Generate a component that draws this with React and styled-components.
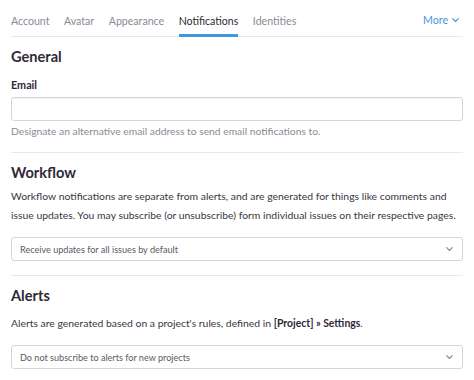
import React from "react";
import styled, { createGlobalStyle } from "styled-components";

const Global = createGlobalStyle`
  html, body { margin: 0; padding: 0; background: #fff; }
  body { font-family: Lato, "Open Sans", Arial, sans-serif; color: #2f2936; -webkit-font-smoothing: antialiased; }
  * { box-sizing: border-box; }
`;

const Page = styled.div`
  padding: 0 11px;
  width: 474px;
`;

const TabBar = styled.nav`
  display: flex;
  align-items: flex-end;
  height: 37px;
  border-bottom: 1px solid #e9e8ec;
`;

const Tab = styled.a`
  font-size: 10.6px;
  line-height: 16px;
  padding: 13px 0 5px;
  margin-right: 14.5px;
  margin-bottom: -1px;
  color: ${(p) => (p.$active ? "#2f2936" : "#8c8896")};
  border-bottom: 3px solid ${(p) => (p.$active ? "#3d98dd" : "transparent")};
  text-decoration: none;
  white-space: nowrap;
`;

const More = styled.a`
  margin-left: auto;
  display: flex;
  align-items: center;
  gap: 4px;
  font-size: 10.6px;
  line-height: 16px;
  padding: 13px 4px 8px 0;
  color: #3d98dd;
`;

const Section = styled.section`
  padding: 10px 0 14px;
  border-bottom: ${(p) => (p.$last ? "none" : "1px solid #e9e8ec")};
`;

const Heading = styled.h2`
  margin: 0;
  font-size: 14.6px;
  line-height: 20px;
  font-weight: 700;
  color: #2f2936;
`;

const Label = styled.label`
  display: block;
  margin-top: 10px;
  font-size: 10.8px;
  line-height: 16px;
  font-weight: 700;
  color: #2f2936;
`;

const Input = styled.div`
  margin-top: 4px;
  height: 24px;
  border: 1px solid #d6d3dc;
  border-radius: 3px;
  background: #fff;
  box-shadow: inset 0 1px 1px rgba(0, 0, 0, 0.04);
`;

const Help = styled.p`
  margin: 3px 0 0;
  font-size: 10.3px;
  line-height: 14px;
  color: #8c8896;
`;

const Para = styled.p`
  margin: ${(p) => p.$top}px 0 0;
  font-size: 10.4px;
  line-height: 19px;
  color: #3a3542;
  strong { font-weight: 700; color: #2f2936; }
`;

const Select = styled.div`
  margin-top: 12px;
  height: 24px;
  display: flex;
  align-items: center;
  justify-content: space-between;
  padding: 0 9px 0 8px;
  border: 1px solid #d6d3dc;
  border-radius: 3px;
  font-size: 9.1px;
  color: #5c5866;
  background: #fff;
`;

const Chevron = ({ color = "#8c8896", size = 7 }) => (
  <svg width={size} height={size * 0.6} viewBox="0 0 10 6" fill="none">
    <path d="M1 1l4 4 4-4" stroke={color} strokeWidth="1.6" strokeLinecap="round" strokeLinejoin="round" />
  </svg>
);

export default function App() {
  return (
    <Page>
      <Global />
      <TabBar>
        <Tab>Account</Tab>
        <Tab>Avatar</Tab>
        <Tab>Appearance</Tab>
        <Tab $active>Notifications</Tab>
        <Tab>Identities</Tab>
        <More>
          More <Chevron color="#3d98dd" />
        </More>
      </TabBar>

      <Section>
        <Heading>General</Heading>
        <Label>Email</Label>
        <Input />
        <Help>Designate an alternative email address to send email notifications to.</Help>
      </Section>

      <Section>
        <Heading>Workflow</Heading>
        <Para $top={4}>
          Workflow notifications are separate from alerts, and are generated for things like comments and
          issue updates. You may subscribe (or unsubscribe) form individual issues on their respective pages.
        </Para>
        <Select>
          Receive updates for all issues by default
          <Chevron />
        </Select>
      </Section>

      <Section $last>
        <Heading>Alerts</Heading>
        <Para $top={8}>
          Alerts are generated based on a project's rules, defined in <strong>[Project] » Settings</strong>.
        </Para>
        <Select>
          Do not subscribe to alerts for new projects
          <Chevron />
        </Select>
      </Section>
    </Page>
  );
}
